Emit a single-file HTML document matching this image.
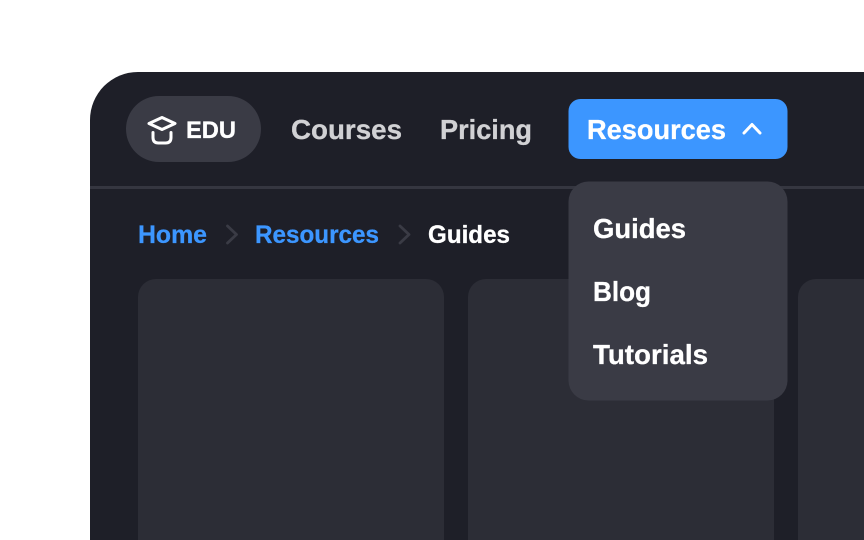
<!DOCTYPE html>
<html lang="en">
<head>
<meta charset="utf-8">
<title>EDU</title>
<style>
html,body{margin:0;padding:0;width:864px;height:540px;overflow:hidden;background:#fff}
svg{display:block}
text{font-family:"Liberation Sans",sans-serif;font-weight:700;stroke-width:.3px;paint-order:stroke}
</style>
</head>
<body>
<svg width="864" height="540" viewBox="0 0 864 540" xmlns="http://www.w3.org/2000/svg">
  <path d="M864 72H138A48 48 0 0 0 90 120V540H864Z" fill="#1e1f28"/>
  <rect x="90" y="186" width="774" height="3" fill="#353640"/>

  <path d="M138 540V297A18 18 0 0 1 156 279H426A18 18 0 0 1 444 297V540Z" fill="#2c2d36"/>
  <path d="M468 540V297A18 18 0 0 1 486 279H756A18 18 0 0 1 774 297V540Z" fill="#2c2d36"/>
  <path d="M798 540V297A18 18 0 0 1 816 279H864V540Z" fill="#2c2d36"/>

  <rect x="126" y="96" width="135" height="66" rx="33" fill="#3a3b45"/>
  <g fill="none" stroke="#fff" stroke-width="3" stroke-linecap="round" stroke-linejoin="round">
    <path d="M162 117.500L175 123.500L162 129.500L149 123.500Z"/>
    <path d="M153 132.500V137.500Q153 143 158.500 143H165.500Q171 143 171 137.500V132.500"/>
  </g>
  <text x="186" y="138" font-size="24" fill="#fff" stroke="#fff" textLength="50" lengthAdjust="spacingAndGlyphs">EDU</text>

  <text x="291" y="139" font-size="27.500" fill="#d1d1d4" stroke="#d1d1d4" textLength="111" lengthAdjust="spacingAndGlyphs">Courses</text>
  <text x="440" y="139" font-size="27.500" fill="#d1d1d4" stroke="#d1d1d4" textLength="92" lengthAdjust="spacingAndGlyphs">Pricing</text>

  <rect x="568.500" y="99" width="219" height="60" rx="12" fill="#3c96ff"/>
  <text x="587" y="139" font-size="27.500" fill="#fff" stroke="#fff" textLength="139" lengthAdjust="spacingAndGlyphs">Resources</text>
  <path d="M744 133L752 124.500L760 133" fill="none" stroke="#fff" stroke-width="3" stroke-linecap="round" stroke-linejoin="round"/>

  <text x="138" y="243" font-size="25" fill="#3c96ff" stroke="#3c96ff" textLength="69" lengthAdjust="spacingAndGlyphs">Home</text>
  <path d="M227.500 226L236.500 234.500L227.500 243" fill="none" stroke="#3a3b45" stroke-width="2.800" stroke-linecap="round" stroke-linejoin="round"/>
  <text x="255" y="243" font-size="25" fill="#3c96ff" stroke="#3c96ff" textLength="124" lengthAdjust="spacingAndGlyphs">Resources</text>
  <path d="M400 226L409 234.500L400 243" fill="none" stroke="#3a3b45" stroke-width="2.800" stroke-linecap="round" stroke-linejoin="round"/>
  <text x="428" y="243" font-size="25" fill="#fff" stroke="#fff" textLength="82" lengthAdjust="spacingAndGlyphs">Guides</text>

  <rect x="568.500" y="181.500" width="219" height="219" rx="20" fill="#3a3b45"/>
  <text x="593" y="238" font-size="27.500" fill="#fff" stroke="#fff" textLength="93" lengthAdjust="spacingAndGlyphs">Guides</text>
  <text x="593" y="301" font-size="27.500" fill="#fff" stroke="#fff" textLength="58" lengthAdjust="spacingAndGlyphs">Blog</text>
  <text x="593" y="364" font-size="27.500" fill="#fff" stroke="#fff" textLength="115" lengthAdjust="spacingAndGlyphs">Tutorials</text>
</svg>
</body>
</html>
